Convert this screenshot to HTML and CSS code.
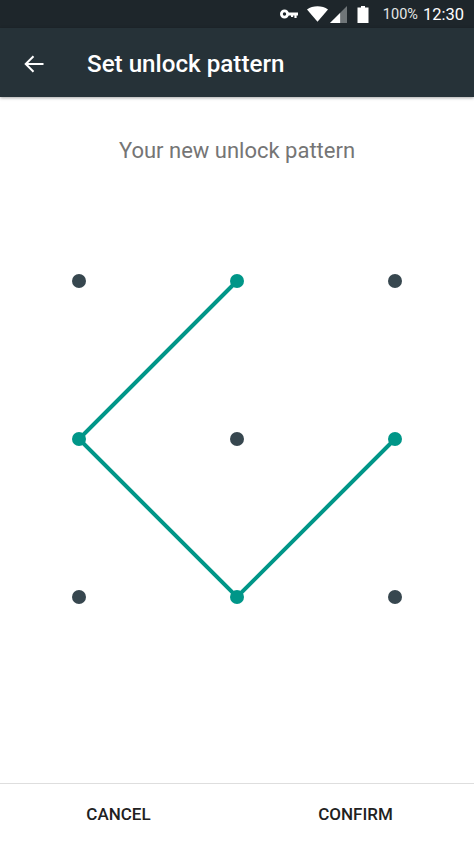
FILE: index.html
```html
<!DOCTYPE html>
<html lang="en">
<head>
<meta charset="utf-8">
<title>Set unlock pattern</title>
<link rel="stylesheet" href="styles.css">
</head>
<body>
<div class="screen">
  <div class="status">
    <svg class="ic-key" viewBox="0 0 18 10"><circle cx="4.5" cy="5" r="3.1" fill="none" stroke="#fff" stroke-width="2.8"/><path d="M8 3.5h10v3h-1.4v2.4h-2.2V6.5h-1.2v1.6H11V6.5H8z" fill="#fff"/></svg>
    <svg class="ic-wifi" viewBox="0 0 22 16"><path d="M0 3.2C3 1 7 0 11 0s8 1 11 3.2L11 16z" fill="#fff"/></svg>
    <svg class="ic-signal" viewBox="0 0 16 16"><path d="M0 16 16 0v16z" fill="#6f7578"/><path d="M0 16 9.5 6.5V16z" fill="#fff"/></svg>
    <svg class="ic-batt" viewBox="0 0 11 17"><path d="M3.5 0h4v1.5H11V17H0V1.5h3.5z" fill="#fff"/></svg>
    <span class="pct">100%</span>
    <span class="clock">12:30</span>
  </div>
  <header class="appbar">
    <svg class="ic-back" viewBox="0 0 20 18"><path d="M19.5 9H2M9.5 1.2 1.7 9l7.8 7.8" fill="none" stroke="#fff" stroke-width="2"/></svg>
    <h1 class="title">Set unlock pattern</h1>
  </header>
  <main class="content">
    <p class="prompt">Your new unlock pattern</p>
    <svg class="pattern" viewBox="0 0 474 474">
      <polyline class="trace" points="237,79 79,237 237,395 395,237"/>
      <circle class="dot" cx="79" cy="79" r="7"/>
      <circle class="dot on" cx="237" cy="79" r="7"/>
      <circle class="dot" cx="395" cy="79" r="7"/>
      <circle class="dot on" cx="79" cy="237" r="7"/>
      <circle class="dot" cx="237" cy="237" r="7"/>
      <circle class="dot on" cx="395" cy="237" r="7"/>
      <circle class="dot" cx="79" cy="395" r="7"/>
      <circle class="dot on" cx="237" cy="395" r="7"/>
      <circle class="dot" cx="395" cy="395" r="7"/>
    </svg>
  </main>
  <footer class="actions">
    <button class="action" type="button">CANCEL</button>
    <button class="action" type="button">CONFIRM</button>
  </footer>
</div>
</body>
</html>
```
FILE: styles.css
```css
* { box-sizing: border-box; }
html, body { margin: 0; padding: 0; }
body { width: 474px; height: 842px; overflow: hidden; background: #fff; font-family: Roboto, "Liberation Sans", sans-serif; }
.screen { width: 474px; height: 842px; display: flex; flex-direction: column; }
.status { height: 28px; flex: none; background: #1e262b; display: flex; align-items: center; justify-content: flex-end; padding-right: 10px; color: #fff; }
.ic-key { width: 18px; height: 10px; margin-right: 9px; }
.ic-wifi { width: 21px; height: 16px; margin-right: 2px; }
.ic-signal { width: 17px; height: 17px; margin-right: 10px; }
.ic-batt { width: 12px; height: 17px; margin-right: 14px; }
.pct { font-size: 14.5px; color: #e4e6e7; margin-right: 5px; }
.clock { font-size: 16.5px; }
.appbar { height: 69px; flex: none; background: #263238; display: flex; align-items: center; padding: 2px 0 0 24px; box-shadow: 0 1px 3px rgba(0,0,0,.35); position: relative; }
.ic-back { width: 20px; height: 18px; margin-right: 43px; }
.title { margin: 0; font-size: 24.2px; font-weight: 500; color: #fff; }
.content { flex: 1; display: flex; flex-direction: column; min-height: 0; }
.prompt { margin: 40px 0 0; height: 27px; line-height: 27px; text-align: center; font-size: 22px; color: #757575; }
.pattern { width: 474px; height: 474px; margin-top: 38px; display: block; flex: none; }
.trace { fill: none; stroke: #009688; stroke-width: 4; }
.dot { fill: #37474f; }
.dot.on { fill: #009688; }
.actions { height: 59px; flex: none; border-top: 1px solid #dedede; display: flex; }
.action { flex: 1; border: 0; background: none; padding: 1px 0 0; font: 500 17px Roboto, "Liberation Sans", sans-serif; color: #212121; }
```
